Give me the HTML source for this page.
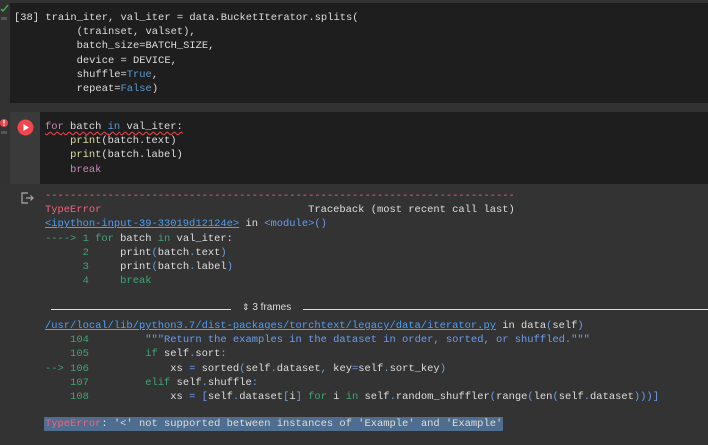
<!DOCTYPE html><html><head><style>
body{margin:0;width:708px;height:445px;background:#323232;overflow:hidden;position:relative;font-family:"Liberation Mono",monospace;font-size:10.45px;color:#dedede}
.a{position:absolute;white-space:pre;line-height:14.2px}
.k{color:#c586c0}.b{color:#569cd6}.y{color:#dcdcaa}
.g{color:#3fa574}.s{color:#6a9ef0}.r{color:#f2637e}.l{color:#4e9ff5;text-decoration:underline}
</style></head><body>
<div style="position:absolute;left:10px;top:3px;width:698px;height:100px;background:#1e1e1e"></div>
<div style="position:absolute;left:10px;top:112px;width:698px;height:72px;background:#1e1e1e"></div>
<div style="position:absolute;left:10px;top:112px;width:30px;height:72px;background:#3a3a3a"></div>
<div style="position:absolute;left:0;top:184px;width:708px;height:261px;background:#333"></div>
<svg style="position:absolute;left:0;top:0" width="10" height="30"><path d="M1 9l2 2 5-6" stroke="#3fb950" stroke-width="1.3" fill="none"/><rect x="1" y="17" width="6" height="3" fill="#555"/></svg>
<svg style="position:absolute;left:0;top:118px" width="10" height="20"><circle cx="4" cy="5" r="4" fill="#f0474f"/><rect x="3.4" y="2" width="1.2" height="3.5" fill="#fff"/><rect x="3.4" y="6.5" width="1.2" height="1.2" fill="#fff"/><rect x="1" y="13" width="6" height="3" fill="#555"/></svg>
<svg style="position:absolute;left:17px;top:119px" width="17" height="17"><circle cx="8.5" cy="8.5" r="8" fill="#f0474f"/><path d="M6.5 5v7l5.5-3.5z" fill="#fff"/></svg>
<svg style="position:absolute;left:20px;top:191px" width="14" height="14"><path d="M8 2H2v10h6" stroke="#aaa" fill="none" stroke-width="1.2"/><path d="M6 7h7M10.5 4.5 13 7l-2.5 2.5" stroke="#aaa" fill="none" stroke-width="1.2"/></svg>
<div class="a" style="left:14px;top:11px">[38] train_iter, val_iter = data.BucketIterator.splits(
          (trainset, valset),
          batch_size=BATCH_SIZE,
          device = DEVICE,
          shuffle=<span class="b">True</span>,
          repeat=<span class="b">False</span>)</div>
<div class="a" style="left:45px;top:120px"><span style="text-decoration:underline wavy #e0444d;text-underline-offset:2px"><span class="k">for</span> batch <span class="b">in</span> val_iter:</span>
    <span class="y">print</span>(batch.text)
    <span class="y">print</span>(batch.label)
    <span class="k">break</span></div>
<div class="a" style="left:45px;top:189px"><span class="r">---------------------------------------------------------------------------</span>
<span class="r">TypeError</span>                                 Traceback (most recent call last)
<span class="l">&lt;ipython-input-39-33019d12124e&gt;</span> in <span class="s">&lt;module&gt;()</span>
<span class="g">----&gt; 1 for</span> batch <span class="g">in</span> val_iter:
<span class="g">      2</span>     print<span class="s">(</span>batch<span class="s">.</span>text<span class="s">)</span>
<span class="g">      3</span>     print<span class="s">(</span>batch<span class="s">.</span>label<span class="s">)</span>
<span class="g">      4     break</span></div>
<div style="position:absolute;left:51px;top:309px;width:180px;height:1px;background:#ddd"></div>
<div style="position:absolute;left:303px;top:309px;width:405px;height:1px;background:#ddd"></div>
<div style="position:absolute;left:242px;top:302px;font:10px 'Liberation Sans',sans-serif;color:#ddd;white-space:pre"><span style="font-size:9px">⇕</span> 3 frames</div>
<div class="a" style="left:45px;top:319px"><span class="l">/usr/local/lib/python3.7/dist-packages/torchtext/legacy/data/iterator.py</span> in data<span class="s">(</span>self<span class="s">)</span>
<span class="g">    104</span>         <span class="s">"""Return the examples in the dataset in order, sorted, or shuffled."""</span>
<span class="g">    105</span>         <span class="g">if</span> self<span class="s">.</span>sort<span class="s">:</span>
<span class="g">--&gt; 106</span>             xs <span class="s">=</span> sorted<span class="s">(</span>self<span class="s">.</span>dataset<span class="s">,</span> key<span class="s">=</span>self<span class="s">.</span>sort_key<span class="s">)</span>
<span class="g">    107</span>         <span class="g">elif</span> self<span class="s">.</span>shuffle<span class="s">:</span>
<span class="g">    108</span>             xs <span class="s">=</span> <span class="s">[</span>self<span class="s">.</span>dataset<span class="s">[</span>i<span class="s">]</span> <span class="g">for</span> i <span class="g">in</span> self<span class="s">.</span>random_shuffler<span class="s">(</span>range<span class="s">(</span>len<span class="s">(</span>self<span class="s">.</span>dataset<span class="s">)))]</span></div>
<div class="a" style="left:44px;top:417px;background:#4f6d8f;padding:0 1px"><span class="r">TypeError</span>: '&lt;' not supported between instances of 'Example' and 'Example'</div>
</body></html>
